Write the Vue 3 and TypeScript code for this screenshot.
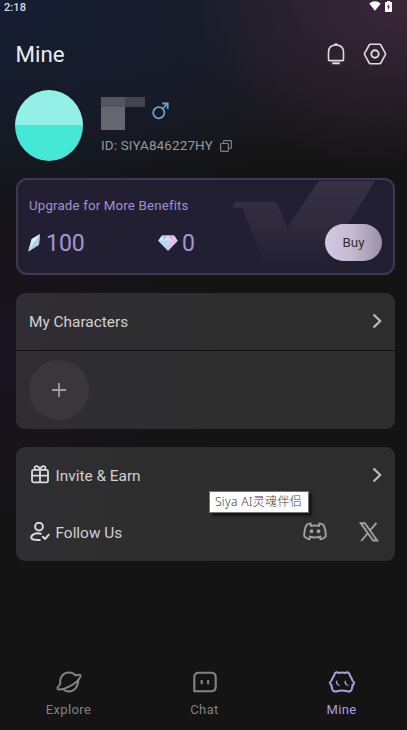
<script setup lang="ts">
import { ref } from 'vue'

type Tab = 'Explore' | 'Chat' | 'Mine'

const tabs: Tab[] = ['Explore', 'Chat', 'Mine']
const active = ref<Tab>('Mine')
const userId = 'SIYA846227HY'
const shards = ref(100)
const gems = ref(0)
</script>

<template>
  <div class="screen">
    <div class="status">
      <span class="clock">2:18</span>
      <div class="status-icons">
        <svg width="12" height="10" viewBox="0 0 12 10"><path d="M.2 2.4Q6-1.9 11.8 2.4L6 9.8z" fill="#fff" /></svg>
        <svg width="7" height="11" viewBox="0 0 7 11">
          <path d="M2 0h3v1h1.4q.6 0 .6.7v8.6q0 .7-.6.7H.6q-.6 0-.6-.7V1.7Q0 1 .6 1H2z" fill="#fff" />
          <path d="M3.9 3L2 6.3h1.2V9L5 5.5H3.900z" fill="#453345" />
        </svg>
      </div>
    </div>

    <header class="header">
      <h1 class="title">Mine</h1>
      <div class="header-icons">
        <svg width="18" height="22" viewBox="0 0 18 22" fill="none" stroke="#dedce2" stroke-width="1.6">
          <path d="M1.500 16.700V9.300C1.500 4.600 4.500 2 9 2s7.500 2.600 7.500 7.300v7.400q0 .9-.9.9H2.400q-.9 0-.9-.9z" />
          <path d="M7.400 1.600Q9 .5 10.600 1.600" />
          <path d="M5.200 20.300h7.600" stroke-width="2" />
        </svg>
        <svg width="24" height="22" viewBox="0 0 24 22" fill="none" stroke="#dedce2" stroke-width="1.6" stroke-linejoin="round">
          <path d="M7.300 1.300h9.400q.7 0 1.100.7l4.600 8.300q.4.700 0 1.400L17.800 20q-.4.700-1.100.7H7.300q-.7 0-1.100-.7L1.600 11.700q-.4-.7 0-1.400L6.200 2q.4-.7 1.100-.7z" />
          <circle cx="12" cy="11" r="3.700" stroke-width="1.900" />
        </svg>
      </div>
    </header>

    <section class="profile">
      <div class="avatar"></div>
      <div class="identity">
        <div class="name-row">
          <div class="name-mask"><i class="m1"></i><i class="m2"></i><i class="m3"></i></div>
          <svg width="17" height="18" viewBox="0 0 17 18" fill="none" stroke="#6a9fd0" stroke-width="1.8">
            <circle cx="6.800" cy="10.700" r="5.600" />
            <path d="M10.900 6.500L15.300 1.900M10.300 1.500h5.400v5.400" />
          </svg>
        </div>
        <div class="id-row">
          <span>ID: {{ userId }}</span>
          <svg width="12" height="12" viewBox="0 0 12 12" fill="none" stroke="#7e7f84" stroke-width="1.2">
            <rect x=".6" y="3.500" width="7.800" height="7.800" rx=".8" />
            <path d="M3.600 3.300V1.400q0-.8.8-.8h6.200q.8 0 .8.8v6.200q0 .8-.8.8H8.700" />
          </svg>
        </div>
      </div>
    </section>

    <section class="benefits">
      <svg class="mark" width="144" height="92" viewBox="0 0 144 92">
        <defs>
          <linearGradient id="markFill" x1="0" y1="0" x2="0" y2="1">
            <stop offset="0" stop-color="#363145" />
            <stop offset=".5" stop-color="#2e2a3c" />
            <stop offset=".95" stop-color="#231f32" />
          </linearGradient>
        </defs>
        <path d="M86 0H142L84 92H35L9.500 27H3Q0 27 0 24T3 21H41Q43.500 21 44.500 23.500L54 47z" fill="url(#markFill)" />
      </svg>
      <div class="benefits-title">Upgrade for More Benefits</div>
      <div class="balances">
        <div class="balance shard">
          <svg width="13" height="18" viewBox="0 0 13 18">
            <path d="M3.600 5.200L11.800.3 11 10.700.3 17.500z" fill="#b4d8ea" />
            <path d="M11.800.3L5.800 9 .3 17.500 3.600 5.200z" fill="#cdedf6" />
            <path d="M11.800.3L11 10.700.3 17.500 7 8z" fill="#b3cbe8" />
            <path d="M3.600 5.200L11.800.3 6.300 7z" fill="#e3f4f8" />
          </svg>
          <span>{{ shards }}</span>
        </div>
        <div class="balance gem">
          <svg width="20" height="16" viewBox="0 0 20 16">
            <path d="M4 .4h12L19.700 5.700 10 15.700.3 5.700z" fill="#bfcdf2" />
            <path d="M4 .4L6 5.700H.3z" fill="#d3f0f5" />
            <path d="M4 .4h6L6 5.700z" fill="#a7c7eb" />
            <path d="M10 .4l4 5.300H6z" fill="#dfe3fa" />
            <path d="M10 .4h6l-2 5.300z" fill="#d0b5e9" />
            <path d="M16 .4L19.700 5.700H14z" fill="#efc4e8" />
            <path d="M.3 5.700H6l4 10z" fill="#b1d8f5" />
            <path d="M6 5.700h8l-4 10z" fill="#c9cdf5" />
            <path d="M14 5.700h5.700l-9.700 10z" fill="#e7bee9" />
          </svg>
          <span>{{ gems }}</span>
        </div>
        <button class="buy">Buy</button>
      </div>
    </section>

    <section class="card characters">
      <div class="row characters-head">
        <span class="label">My Characters</span>
        <svg class="chevron" width="10" height="16" viewBox="0 0 10 16"><path d="M1.500 1.500L8.200 8l-6.700 6.500" /></svg>
      </div>
      <div class="characters-body">
        <button class="add" aria-label="Add">
          <svg width="14" height="14" viewBox="0 0 14 14"><path d="M7 0v14M0 7h14" stroke="#a09ea3" stroke-width="1.800" /></svg>
        </button>
      </div>
    </section>

    <section class="card links">
      <div class="row link">
        <svg class="lead" width="20" height="20" viewBox="0 0 20 20" fill="none" stroke="#dadadb" stroke-width="1.800">
          <rect x="2" y="4.800" width="16" height="12.600" rx="1.800" />
          <path d="M10 4.800v12.600M2 10.700h16M5.200 4.800C4 2.800 4.500 1.200 6.300 1.200S9.300 2.400 10 4.600C10.700 2.400 12 1.200 13.700 1.200s2.300 1.600 1.100 3.600" />
        </svg>
        <span class="label">Invite &amp; Earn</span>
        <svg class="chevron" width="10" height="16" viewBox="0 0 10 16"><path d="M1.500 1.500L8.200 8l-6.700 6.500" /></svg>
        <div class="tooltip">Siya AI灵魂伴侣</div>
      </div>
      <div class="row link">
        <svg class="lead" width="20" height="20" viewBox="0 0 20 20" fill="none" stroke="#dadadb" stroke-width="2" stroke-linecap="round" stroke-linejoin="round">
          <circle cx="9" cy="4.600" r="3.900" />
          <path d="M10.800 11.800C5.500 10.400 1.200 12.600 1.200 15.600c0 2 2.500 2.500 8.600 2.300" />
          <path d="M12.800 14.700l2.400 2.200 3.600-4.200" />
        </svg>
        <span class="label">Follow Us</span>
        <div class="socials">
          <svg width="24" height="20" viewBox="0 0 24 20" fill="none" stroke="#a0a0a0" stroke-width="1.900" stroke-linecap="round" stroke-linejoin="round">
            <path d="M8.300 3.600C8.100 2.500 7.900 1.600 7.500 1.400 6.200 1.500 4.700 2.100 3.700 2.800 2 5.800 1.200 10.100 1.200 14.300c1.500 1.600 3.200 2.600 5.200 3L7.600 14.900" />
            <path d="M15.700 3.600c.2-1.100.4-2 .8-2.200 1.300.1 2.800.7 3.800 1.400C22 5.800 22.800 10.100 22.800 14.300c-1.500 1.600-3.200 2.600-5.200 3L16.400 14.900" />
            <path d="M7.600 3.900Q12 3 16.400 3.900M6.500 14.500Q12 16.400 17.500 14.500" />
            <circle cx="8.500" cy="9.300" r="1" fill="#a0a0a0" />
            <circle cx="15.500" cy="9.300" r="1" fill="#a0a0a0" />
          </svg>
          <svg width="20" height="20" viewBox="0 0 20 20" fill="none" stroke="#a0a0a0" stroke-width="1.900">
            <path d="M1.800 1.300h4.100l12.300 17.200h-4.100z" />
            <path d="M17.500.8L11 8.400M8.600 11.400L2.200 19" />
          </svg>
        </div>
      </div>
    </section>

    <nav class="tabs">
      <button v-for="tab in tabs" :key="tab" class="tab" :class="{ active: tab === active }" @click="active = tab">
        <svg v-if="tab === 'Explore'" width="26" height="22" viewBox="0 0 26 22" fill="none" stroke="currentColor" stroke-width="2" stroke-linejoin="round" stroke-linecap="round">
          <path d="M4.300 12.700C3.300 6.700 7 1.500 13 1.500c2.700 0 4.800.9 6.300 2.700" />
          <path d="M19.300 4.200l3.900-.4c1.300 0 1.700.8 1.200 1.900C22.800 9.500 17.500 13.500 13 15.700 9.500 17.500 5 18.800 2.600 18.500c-1.200-.1-1.400-1.100-.8-2.200l2.500-3.600" />
          <path d="M22.300 9.300C22.300 15.800 18 20.400 13 20.400c-2.300 0-3.800-.6-5.200-1.700" />
        </svg>
        <svg v-else-if="tab === 'Chat'" width="26" height="22" viewBox="0 0 26 22" fill="none" stroke="currentColor" stroke-width="2.100">
          <path d="M2.300 20.200V6.300Q2.300 1.800 6.800 1.800h12.400q4.500 0 4.500 4.500v9.400q0 4.500-4.500 4.500z" stroke-linejoin="round" />
          <path d="M9.700 9v4.200M16.100 9v4.200" />
        </svg>
        <svg v-else width="28" height="22" viewBox="0 0 28 22" fill="none" stroke="currentColor" stroke-width="2" stroke-linejoin="round">
          <path d="M8 1.500Q9.500.9 10.800 2 14 1.200 17.200 2 18.500.9 20 1.500 21.300 2 21.600 3.800L24 8.200Q23.900 10.100 26.200 11.500 26 13.300 24.400 13.900 25.200 15.300 24 16.500 24.300 18.600 22.500 20 20.300 21.200 18.300 19.900 14 19.300 9.700 19.900 7.700 21.200 5.500 20 3.700 18.600 4 16.500 2.800 15.300 3.600 13.900 2 13.300 1.800 11.500 4.100 10.100 4 8.200L6.400 3.800Q6.700 2 8 1.500z" />
          <path d="M9.300 9a3.100 3.100 0 1 0 3.600 5.100c-2.500.1-4.200-2.200-3.600-5.100zM17.900 9a3.100 3.100 0 1 0 3.600 5.100c-2.500.1-4.200-2.200-3.600-5.100z" fill="currentColor" stroke="none" />
        </svg>
        <span>{{ tab }}</span>
      </button>
    </nav>
  </div>
</template>

<style>
html, body { background: #141414; }
</style>

<style scoped>
* { box-sizing: border-box; }
.screen {
  width: 407px;
  height: 730px;
  display: flex;
  flex-direction: column;
  overflow: hidden;
  color: #d2d1d4;
  font-family: Roboto, "Noto Sans CJK SC", sans-serif;
  background:
    radial-gradient(ellipse 200px 170px at 395px 0, #39273a 0, rgba(57, 39, 58, .5) 45%, rgba(57, 39, 58, 0) 100%),
    radial-gradient(ellipse 330px 230px at 20px 0, #151d31 0, rgba(21, 29, 46, .75) 50%, rgba(21, 29, 46, 0) 100%),
    radial-gradient(ellipse 420px 175px at 270px 0, rgba(38, 31, 42, .85) 0, rgba(38, 31, 42, 0) 100%),
    radial-gradient(ellipse 190px 190px at 0 350px, #1a1421 0, rgba(26, 20, 33, 0) 100%),
    #141414;
}
svg { display: block; flex: none; }
button { border: 0; padding: 0; background: none; font-family: inherit; }

.status {
  height: 18px;
  padding: 0 15px 0 4px;
  display: flex;
  justify-content: space-between;
}
.clock { font-size: 11px; line-height: 15px; font-weight: 500; letter-spacing: .1px; color: #dcdde2; }
.status-icons { display: flex; gap: 4px; padding-top: 1px; }

.header {
  height: 72px;
  padding: 0 20px 0 15.5px;
  display: flex;
  align-items: center;
  justify-content: space-between;
}
.title { margin: 0; font-size: 22.3px; line-height: 30px; font-weight: 400; color: #ecebf0; }
.header-icons { display: flex; align-items: center; gap: 18px; padding-bottom: 1px; }

.profile { display: flex; height: 88px; padding-left: 15px; }
.avatar {
  width: 68px;
  height: 71px;
  border-radius: 50%;
  background: linear-gradient(#93f0e6 35px, #45e8d7 35px);
}
.identity { padding: 7px 0 0 18px; }
.name-row { display: flex; gap: 7px; height: 33px; }
.name-row svg { margin-top: 5px; }
.name-mask { display: grid; grid-template: 10px 23px / 24px 20px; }
.m1 { background: #55555f; }
.m2 { background: #44444e; }
.m3 { background: #666670; }
.id-row {
  display: flex;
  align-items: center;
  gap: 7px;
  height: 31px;
  font-size: 13.4px;
  line-height: 31px;
  letter-spacing: .17px;
  color: #98989d;
}

.benefits {
  position: relative;
  height: 97px;
  margin: 0 12px 0 16px;
  padding: 17px 11px 0 10px;
  border: 2px solid #3f394f;
  border-radius: 11px;
  background: #231f32;
}
.mark { position: absolute; right: 16px; top: 1px; }
.benefits-title { position: relative; padding-left: 1px; font-size: 13.3px; line-height: 18px; letter-spacing: .16px; color: #a191ce; }
.balances { position: relative; display: flex; align-items: center; height: 37px; margin-top: 9px; }
.balance { display: flex; align-items: center; font-size: 23px; line-height: 30px; color: #a496d2; }
.balance span { padding-top: 2px; }
.shard { width: 130px; gap: 5px; }
.gem { gap: 4px; }
.buy {
  width: 57px;
  height: 37px;
  margin-left: auto;
  border-radius: 19px;
  background: linear-gradient(90deg, #d3c8e2, #c6bbd3 45%, #9b90a6);
  color: #302b37;
  font-size: 13.3px;
  line-height: 37px;
}

.card { margin: 18px 12px 0 16px; border-radius: 9px; background: linear-gradient(100deg, #302d33 0, #2e2d30 35%, #2d2d2d 60%); }
.row { display: flex; align-items: center; }
.label { font-size: 15.4px; line-height: 22px; }
.chevron { margin-left: auto; fill: none; stroke: #bcbcbd; stroke-width: 2.2; }
.characters { height: 136px; }
.characters-head { height: 58px; padding: 0 13px 1px 13px; border-bottom: 1px solid #111; }
.characters-head .label { padding-top: 2px; }
.characters-body { padding: 9px 13px; }
.add {
  width: 60px;
  height: 60px;
  display: grid;
  place-items: center;
  border-radius: 50%;
  background: #3a373b;
}
.links { height: 114px; background: linear-gradient(100deg, #2f2e31 0, #2e2e2f 30%, #2d2d2d 55%); }
.link { position: relative; height: 57px; padding: 0 13px 1px 14px; }
.link .lead { margin-right: 5.5px; }
.link .label { padding-top: 2px; }
.socials { display: flex; gap: 32px; margin-left: auto; padding-right: 3px; }
.tooltip {
  position: absolute;
  left: 193px;
  top: 44px;
  width: 100px;
  height: 22px;
  padding-left: 5px;
  border: 1px solid #767676;
  background: #fff;
  box-shadow: 3px 3px 2px rgba(0, 0, 0, .55);
  color: #404040;
  font-family: "Noto Sans", "Noto Sans CJK SC", sans-serif;
  font-size: 12px;
  font-weight: 300;
  line-height: 20px;
  letter-spacing: .32px;
  white-space: nowrap;
}

.tabs { display: flex; height: 61px; margin: auto -2px 0 0; }
.tab {
  flex: 1 1 0;
  display: flex;
  flex-direction: column;
  align-items: center;
  padding: 2px 0 0 1px;
  color: #828282;
}
.tab:last-child { padding-left: 2px; }
.tab span { margin-top: 8px; font-size: 13px; line-height: 18px; letter-spacing: .35px; }
.tab.active { color: #ad9fdd; }
</style>
